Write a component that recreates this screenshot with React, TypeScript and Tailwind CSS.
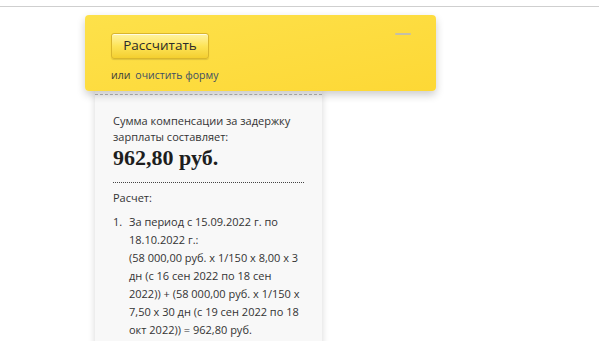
import React from "react";

export default function App() {
  return (
    <div className="w-[599px] h-[341px] overflow-hidden bg-white" style={{ fontFamily: '"Open Sans", "Noto Sans", sans-serif' }}>
      <div className="pt-[6px]">
        <div className="h-px bg-[#cfcfcf]" />
      </div>
      <div className="ml-[85px] mt-[8px] w-[351px]">
        <div className="relative z-10 h-[76px] rounded-[4px] bg-gradient-to-br from-[#fde14a] to-[#fdd835] shadow-[0_4px_8px_rgba(0,0,0,0.2)] pl-[26px] pt-[17px]">
          <button className="h-[26px] w-[98px] rounded-[3px] border border-[#d9b62c] bg-gradient-to-b from-[#fff3a0] via-[#fde457] to-[#f4cf2e] text-[13.5px] leading-none text-[#2b2b2b] shadow-[inset_0_1px_0_rgba(255,255,255,0.7),0_1px_1px_rgba(0,0,0,0.12)]">
            Рассчитать
          </button>
          <div className="mt-[9px] flex items-center gap-[5px] text-[10.5px] leading-[14px]">
            <span className="text-[#3a3a3a]">или</span>
            <span className="text-[#3d4f63]">очистить форму</span>
          </div>
          <div className="absolute right-[25px] top-[18px] h-[2px] w-[16px] rounded-full bg-[#c4c0a8]" />
        </div>
        <div className="ml-[10px] w-[227px] h-[260px] bg-[#f8f8f8] shadow-[0_0_7px_rgba(0,0,0,0.16)] pt-[3px] text-[#333]">
          <div className="border-t border-dashed border-[#b5b5b5]" />
          <div className="px-[18px] pt-[18px]">
            <p className="text-[11px] leading-[16px]">Сумма компенсации за задержку зарплаты составляет:</p>
            <p className="mt-px text-[22px] leading-[24px] font-bold text-[#1e1e1e]" style={{ fontFamily: '"Liberation Serif", "DejaVu Serif", serif' }}>
              962,80 руб.
            </p>
            <div className="mt-[12px] border-b border-dotted border-[#444]" />
            <p className="mt-[7px] text-[11px] leading-[16px]">Расчет:</p>
            <ol className="mt-[7px] text-[11px] leading-[18px]">
              <li className="flex">
                <span className="w-[16px] shrink-0">1.</span>
                <span>
                  За период с 15.09.2022 г. по 18.10.2022 г.:
                  <br />
                  (58 000,00 руб. x 1/150 x 8,00 x 3 дн (с 16 сен 2022 по 18 сен 2022)) + (58 000,00 руб. x 1/150 x 7,50 x 30 дн (с 19 сен 2022 по 18 окт 2022)) = 962,80 руб.
                </span>
              </li>
            </ol>
          </div>
        </div>
      </div>
    </div>
  );
}
